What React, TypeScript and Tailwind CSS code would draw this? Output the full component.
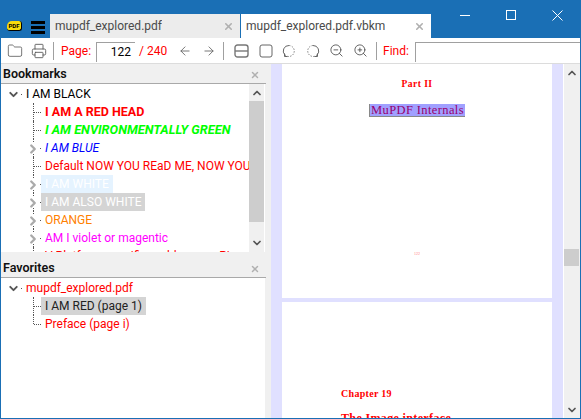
import { ChevronDown, ChevronRight, ChevronUp, X, Folder, Printer, ArrowLeft, ArrowRight, ZoomIn, ZoomOut } from 'lucide-react';

const font = { fontFamily: 'Roboto, sans-serif' };

function Logo() {
	return (
		<div className="w-[15px] h-[10px] bg-[#f7dc0c] rounded-[3px] rounded-tl-[5px] border-r border-b border-black flex items-center justify-center">
			<span className="text-[6px] font-bold leading-none text-black">PDF</span>
		</div>
	);
}

function Rotate({ flip }: { flip?: boolean }) {
	return (
		<svg width="14" height="14" viewBox="0 0 14 14" fill="none" stroke="#666" strokeWidth="1" className={flip ? '-scale-x-100' : ''}>
			<path d="M7 1.5A5.5 5.5 0 0 1 11 11" />
			<path d="M11 11A5.5 5.5 0 1 1 7 1.5" strokeDasharray="1.2 1.6" />
			<path d="M8.5 12.5H11.5V9.5" />
		</svg>
	);
}

function Sep({ className }: { className: string }) {
	return <div className={`w-px h-[18px] bg-[#a0a0a0] shrink-0 ${className}`} />;
}

function Tab({ title, active }: { title: string; active?: boolean }) {
	return (
		<div className={`w-[190px] h-[24px] flex items-center pl-[5px] pr-[6px] justify-between text-[12px] ${active ? 'bg-white' : 'bg-[#ececec]'}`}>
			<span className="truncate text-[#4a4a4a]">{title}</span>
			<X size={11} strokeWidth={3.5} className="text-[#b0b0b0]" />
		</div>
	);
}

function Toolbar() {
	return (
		<div className="h-[26px] bg-white flex items-center border-b border-[#dcdcdc] pl-[6px] text-[12px] overflow-hidden shrink-0">
			<Folder size={16} strokeWidth={1.2} className="text-[#555] mr-[8px] shrink-0" />
			<Printer size={16} strokeWidth={1.3} className="text-[#555] shrink-0" />
			<Sep className="ml-[6px] mr-[7px]" />
			<span className="text-[#ff0000] w-[35px] shrink-0">Page:</span>
			<div className="w-[39px] h-[20px] mt-[2px] border-l border-t border-[#a0a0a0] text-right leading-[18px] pr-[4px] text-black shrink-0">122</div>
			<span className="text-[#ff0000] ml-[4px] w-[39px] shrink-0">/ 240</span>
			<ArrowLeft size={14} strokeWidth={1.5} className="text-[#666] mr-[10px] shrink-0" />
			<ArrowRight size={14} strokeWidth={1.5} className="text-[#666] shrink-0" />
			<Sep className="ml-[7px] mr-[10px]" />
			<svg width="15" height="14" viewBox="0 0 15 14" fill="none" stroke="#777" strokeWidth="1.4" className="mr-[10px] shrink-0">
				<rect x="1" y="1" width="13" height="12" rx="2.5" />
				<path d="M1 7H14" />
			</svg>
			<svg width="14" height="14" viewBox="0 0 14 14" fill="none" stroke="#666" strokeWidth="1" className="mr-[9px] shrink-0">
				<rect x="1" y="1" width="12" height="12" rx="2" />
			</svg>
			<div className="mr-[10px] shrink-0"><Rotate flip /></div>
			<div className="mr-[9px] shrink-0"><Rotate /></div>
			<ZoomOut size={15} strokeWidth={1.3} className="text-[#444] mr-[9px] shrink-0" />
			<ZoomIn size={15} strokeWidth={1.3} className="text-[#444] shrink-0" />
			<Sep className="ml-[8px] mr-[6px]" />
			<span className="text-[#ff0000] w-[32px] shrink-0">Find:</span>
			<div className="flex-1 h-[20px] mt-[2px] border-l border-t border-[#a0a0a0]" />
		</div>
	);
}

function PanelHeader({ title }: { title: string }) {
	return (
		<div className="h-[20px] flex items-center justify-between pt-[2px] pl-[2px] pr-[6px] bg-[#f0f0f0] border-b border-[#a9a9a9] shrink-0">
			<span className="text-[12.5px] font-semibold text-[#111]">{title}</span>
			<X size={10} strokeWidth={3.5} className="text-[#b0b0b0]" />
		</div>
	);
}

type Row = { text: string; cls: string; depth: 0 | 1; expander?: 'open' | 'closed'; bg?: string; last?: boolean };

const bookmarks: Row[] = [
	{ text: 'I AM BLACK', cls: 'text-black text-[12px]', depth: 0, expander: 'open' },
	{ text: 'I AM A RED HEAD', cls: 'text-[#ff0000] font-bold text-[12.5px]', depth: 1 },
	{ text: 'I AM ENVIRONMENTALLY GREEN', cls: 'text-[#00ff00] font-bold italic text-[12.8px]', depth: 1 },
	{ text: 'I AM BLUE', cls: 'text-[#0000ff] italic text-[12px]', depth: 1, expander: 'closed' },
	{ text: 'Default NOW YOU REaD ME, NOW YOU DON\'T', cls: 'text-[#ff0000] text-[12px]', depth: 1 },
	{ text: 'I AM WHITE', cls: 'text-white text-[12px]', depth: 1, expander: 'closed', bg: 'bg-[#e5f3ff]' },
	{ text: 'I AM ALSO WHITE', cls: 'text-white text-[12px]', depth: 1, expander: 'closed', bg: 'bg-[#d4d4d4]' },
	{ text: 'ORANGE', cls: 'text-[#ff8000] text-[12px]', depth: 1, expander: 'closed' },
	{ text: 'AM I violet or magentic', cls: 'text-[#ff00ff] text-[12px]', depth: 1, expander: 'closed' },
	{ text: 'V Platform specific problems on Pi', cls: 'text-[#ff0000] text-[12px]', depth: 1 },
];

const favorites: Row[] = [
	{ text: 'mupdf_explored.pdf', cls: 'text-[#ff0000] text-[12px]', depth: 0, expander: 'open' },
	{ text: 'I AM RED (page 1)', cls: 'text-[#222] text-[12px]', depth: 1, bg: 'bg-[#d4d4d4]' },
	{ text: 'Preface (page i)', cls: 'text-[#ff0000] text-[12px]', depth: 1, last: true },
];

function TreeRow({ row }: { row: Row }) {
	const guide = row.depth === 1;
	return (
		<div className="h-[18px] flex items-center whitespace-nowrap">
			<div className={`shrink-0 relative h-full ${guide ? 'w-[40px]' : 'w-[21px]'}`}>
				{guide && !row.expander && (
					<>
						<span className={`absolute left-[32px] top-0 border-l border-dotted border-[#555] ${row.last ? 'h-[9px]' : 'h-full'}`} />
						<span className="absolute left-[33px] top-[9px] w-[7px] border-t border-dotted border-[#555]" />
					</>
				)}
				{guide && row.expander && (
					<>
						<span className="absolute left-[32px] top-0 h-[3px] border-l border-dotted border-[#555]" />
						<span className="absolute left-[32px] bottom-0 h-[3px] border-l border-dotted border-[#555]" />
					</>
				)}
				{row.expander && <span className="absolute right-0 top-[9px] w-px h-px bg-[#555]" />}
				{row.expander === 'open' && <ChevronDown size={13} strokeWidth={3.5} className="text-[#555] absolute left-[6px] top-[3px]" />}
				{row.expander === 'closed' && <ChevronRight size={14} strokeWidth={4} className="text-[#aaa] absolute left-[25px] top-[3px]" />}
			</div>
			<span className={`px-[4px] h-full leading-[18px] ${row.bg ?? ''} ${row.cls}`}>{row.text}</span>
		</div>
	);
}

export default function App() {
	return (
		<div className="w-[581px] h-[419px] bg-[#1a6fb5] flex flex-col px-[1px] pb-[1px] overflow-hidden" style={font}>
			<div className="h-[38px] flex shrink-0">
				<div className="w-[49px] flex items-end pb-[7px] pl-[6px] gap-[9px]">
					<Logo />
					<div className="flex flex-col gap-[2px] w-[14px] mb-[-3px]">
						<div className="h-[3px] bg-black" />
						<div className="h-[3px] bg-black" />
						<div className="h-[3px] bg-black" />
					</div>
				</div>
				<div className="flex items-end gap-px">
					<Tab title="mupdf_explored.pdf" />
					<Tab title="mupdf_explored.pdf.vbkm" active />
				</div>
				<div className="flex-1 flex justify-end text-white">
					<div className="w-[46px] h-[30px] flex items-center justify-center">
						<div className="w-[10px] h-px bg-white" />
					</div>
					<div className="w-[46px] h-[30px] flex items-center justify-center">
						<div className="w-[10px] h-[10px] border border-white" />
					</div>
					<div className="w-[46px] h-[30px] flex items-center justify-center">
						<svg width="11" height="11" viewBox="0 0 11 11" stroke="white" strokeWidth="1"><path d="M0.5 0.5L10.5 10.5M10.5 0.5L0.5 10.5" /></svg>
					</div>
				</div>
			</div>
			<Toolbar />
			<div className="flex-1 flex min-h-0 bg-[#f0f0f0]">
				<div className="w-[265px] flex flex-col shrink-0 min-h-0">
					<PanelHeader title="Bookmarks" />
					<div className="h-[168px] flex bg-white overflow-hidden shrink-0 mr-[1px] pr-[1px]">
						<div className="flex-1 overflow-hidden min-w-0 pt-[1px]">
							{bookmarks.map((r) => <TreeRow key={r.text} row={r} />)}
						</div>
						<div className="w-[15px] bg-[#f0f0f0] shrink-0 flex flex-col items-center relative h-full">
							<ChevronUp size={12} strokeWidth={3.5} className="text-[#555] mt-[3px]" />
							<div className="w-[15px] h-[121px] mt-[2px] bg-[#cdcdcd]" />
							<ChevronDown size={12} strokeWidth={3.5} className="text-[#555] absolute bottom-[3px]" />
						</div>
					</div>
					<div className="h-[6px] shrink-0" />
					<PanelHeader title="Favorites" />
					<div className="flex-1 bg-white pt-[1px] mr-[1px]">
						{favorites.map((r) => <TreeRow key={r.text} row={r} />)}
					</div>
				</div>
				<div className="w-[5px] bg-[#f0f0f0] shrink-0" />
				<div className="flex-1 bg-[#e0e0ff] flex min-w-0">
					<div className="flex-1 flex flex-col px-[11px] gap-[4px] overflow-hidden min-w-0" style={{ fontFamily: '"Liberation Serif", serif' }}>
						<div className="h-[234px] bg-white flex flex-col items-center shrink-0 relative">
							<span className="text-[9.5px] font-bold text-[#ff0000] mt-[14px] tracking-[0.05em] leading-[12px]">Part II</span>
							<span className="text-[12.5px] text-[#99006e] bg-[#a0a0ff] border-b border-l border-[#888] mt-[14px] tracking-[0.03em] leading-[12px] px-px">MuPDF Internals</span>
							<span className="absolute top-[187px] text-[4px] text-[#ff8080]">122</span>
						</div>
						<div className="flex-1 bg-white pl-[59px] pt-[84px]">
							<div className="text-[10px] font-bold text-[#ff0000] tracking-[0.03em]">Chapter 19</div>
							<div className="text-[12px] font-bold text-[#ff0000] mt-[8px] tracking-[0.03em] whitespace-nowrap">The Image interface</div>
						</div>
					</div>
					<div className="w-px bg-white shrink-0" />
					<div className="w-[16px] bg-[#f0f0f0] shrink-0 flex flex-col items-center relative h-full">
						<ChevronUp size={12} strokeWidth={3.5} className="text-[#555] mt-[3px] mr-[1px]" />
						<div className="w-[15px] h-[17px] mt-[170px] bg-[#cdcdcd] self-start" />
						<ChevronDown size={12} strokeWidth={3.5} className="text-[#555] absolute bottom-[2px] mr-[1px]" />
					</div>
				</div>
			</div>
		</div>
	);
}
